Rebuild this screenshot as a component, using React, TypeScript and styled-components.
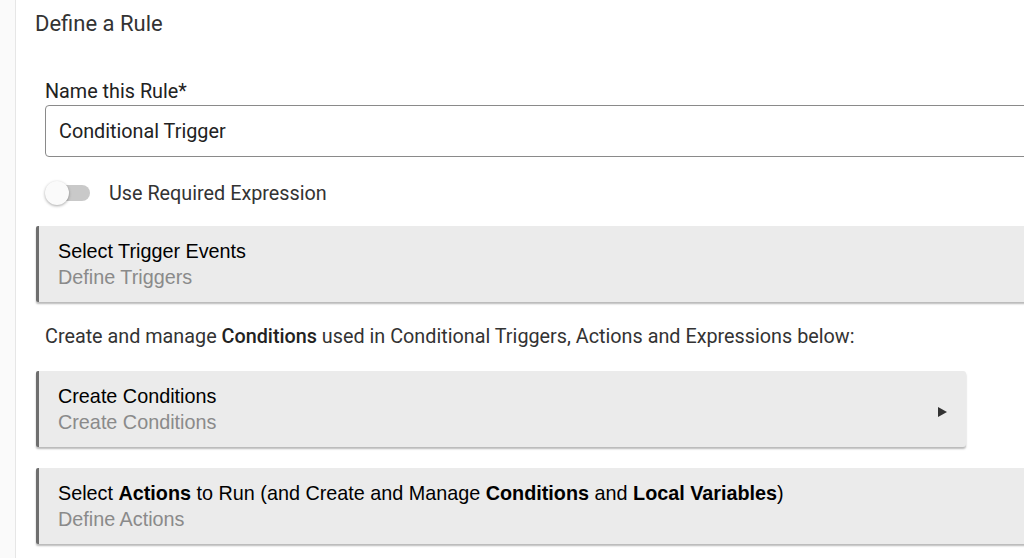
import React from "react";
import styled, { createGlobalStyle } from "styled-components";

const Global = createGlobalStyle`
  html, body { margin: 0; padding: 0; background: #ffffff; overflow: hidden; }
  body { font-family: Roboto, "Liberation Sans", Arial, sans-serif; color: #333; }
`;

const Page = styled.div`
  display: flex;
  width: 1100px;
  min-height: 558px;
`;

const Gutter = styled.div`
  width: 15px;
  flex: none;
  background: #fafafa;
  border-right: 1px solid #e6e6e6;
`;

const Main = styled.main`
  flex: 1;
  padding: 11px 0 0 19px;
  display: flex;
  flex-direction: column;
`;

const Title = styled.h1`
  margin: 0;
  font-family: Roboto, sans-serif;
  font-weight: 400;
  font-size: 22px;
  line-height: 26px;
  color: #333;
`;

const Field = styled.div`
  margin: 42px 0 0 10px;
  display: flex;
  flex-direction: column;
`;

const Label = styled.label`
  font-family: Roboto, sans-serif;
  font-size: 19.8px;
  line-height: 26px;
  color: #222;
`;

const Input = styled.div`
  height: 49px;
  border: 1px solid #8a8a8a;
  border-radius: 4px;
  padding: 1px 13px 0;
  display: flex;
  align-items: center;
  font-family: Roboto, sans-serif;
  font-size: 19.8px;
  color: #222;
`;

const ToggleRow = styled.div`
  margin: 24px 0 0 10px;
  display: flex;
  align-items: center;
  gap: 19px;
  height: 24px;
`;

const Switch = styled.div`
  position: relative;
  width: 45px;
  height: 24px;
  flex: none;
`;

const Track = styled.div`
  position: absolute;
  left: 2px;
  top: 4px;
  width: 43px;
  height: 16px;
  border-radius: 8px;
  background: #c9c9c9;
`;

const Knob = styled.div`
  position: absolute;
  left: 0;
  top: 0;
  width: 24px;
  height: 24px;
  border-radius: 50%;
  background: #fafafa;
  box-shadow: 0 1px 3px rgba(0, 0, 0, 0.35);
`;

const ToggleLabel = styled.span`
  font-family: Roboto, sans-serif;
  font-size: 19.8px;
  color: #333;
`;

const Card = styled.div<{ $width?: number; $mt: number }>`
  margin-top: ${(p) => p.$mt}px;
  margin-left: 1px;
  width: ${(p) => (p.$width ? `${p.$width}px` : "auto")};
  box-sizing: border-box;
  background: #ebebeb;
  border-left: 3px solid #6e6e6e;
  border-radius: 2px 3px 3px 2px;
  box-shadow: 0 2px 2px rgba(0, 0, 0, 0.28);
  padding: 12px 19px;
  display: flex;
  align-items: center;
  justify-content: space-between;
  font-family: "Liberation Sans", Arial, sans-serif;
  font-size: 19.8px;
  line-height: 26px;
`;

const CardText = styled.div`
  display: flex;
  flex-direction: column;
`;

const CardTitle = styled.div`
  color: #000;
  b { font-weight: 700; }
`;

const CardSub = styled.div`
  color: #8a8a8a;
`;

const Arrow = styled.div`
  width: 0;
  height: 0;
  border-top: 5px solid transparent;
  border-bottom: 5px solid transparent;
  border-left: 9px solid #333;
  margin-top: 6px;
`;

const Para = styled.p`
  margin: 22px 0 0 10px;
  font-family: Roboto, sans-serif;
  font-size: 19.8px;
  line-height: 26px;
  color: #333;
  b { font-weight: 500; color: #222; }
`;

export default function App() {
  return (
    <>
      <Global />
      <Page>
        <Gutter />
        <Main>
          <Title>Define a Rule</Title>
          <Field>
            <Label>Name this Rule*</Label>
            <Input>Conditional Trigger</Input>
          </Field>
          <ToggleRow>
            <Switch>
              <Track />
              <Knob />
            </Switch>
            <ToggleLabel>Use Required Expression</ToggleLabel>
          </ToggleRow>
          <Card $mt={21}>
            <CardText>
              <CardTitle>Select Trigger Events</CardTitle>
              <CardSub>Define Triggers</CardSub>
            </CardText>
          </Card>
          <Para>
            Create and manage <b>Conditions</b> used in Conditional Triggers, Actions and Expressions below:
          </Para>
          <Card $mt={21} $width={930}>
            <CardText>
              <CardTitle>Create Conditions</CardTitle>
              <CardSub>Create Conditions</CardSub>
            </CardText>
            <Arrow />
          </Card>
          <Card $mt={21}>
            <CardText>
              <CardTitle>
                Select <b>Actions</b> to Run (and Create and Manage <b>Conditions</b> and <b>Local Variables</b>)
              </CardTitle>
              <CardSub>Define Actions</CardSub>
            </CardText>
          </Card>
        </Main>
      </Page>
    </>
  );
}
